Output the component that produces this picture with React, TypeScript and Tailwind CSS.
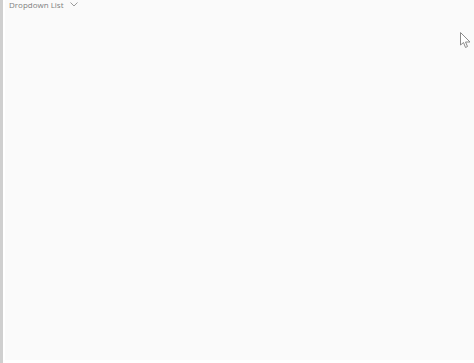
export default function App() {
  return (
    <div className="flex h-[363px] w-[474px] overflow-hidden bg-white font-['Open_Sans',sans-serif]">
      <div className="w-[3px] shrink-0 bg-[#cfcfcf]" />
      <div className="w-[2px] shrink-0 bg-white" />
      <div className="relative flex h-[360px] flex-1 flex-col bg-[#fafafa]">
        <div className="flex h-[10px] items-start gap-[6px] pl-[4px]">
          <span className="text-[8px] leading-[10px] text-[#808080]">Dropdown List</span>
          <svg width="8" height="5" viewBox="0 0 8 5" className="mt-[2px]">
            <path d="M0.5 0.5 L4 4 L7.5 0.5" fill="none" stroke="#9a9a9a" strokeWidth="1" />
          </svg>
        </div>
        <svg
          width="12"
          height="17"
          viewBox="0 0 12 17"
          className="absolute left-[455px] top-[32px]"
        >
          <path
            d="M0.5 0.5 L0.5 13 L3.5 10.5 L5.5 15.5 L7.5 14.5 L5.5 10 L10 10 Z"
            fill="white"
            stroke="#8a8a8a"
            strokeWidth="1"
            strokeLinejoin="round"
          />
        </svg>
      </div>
    </div>
  );
}
